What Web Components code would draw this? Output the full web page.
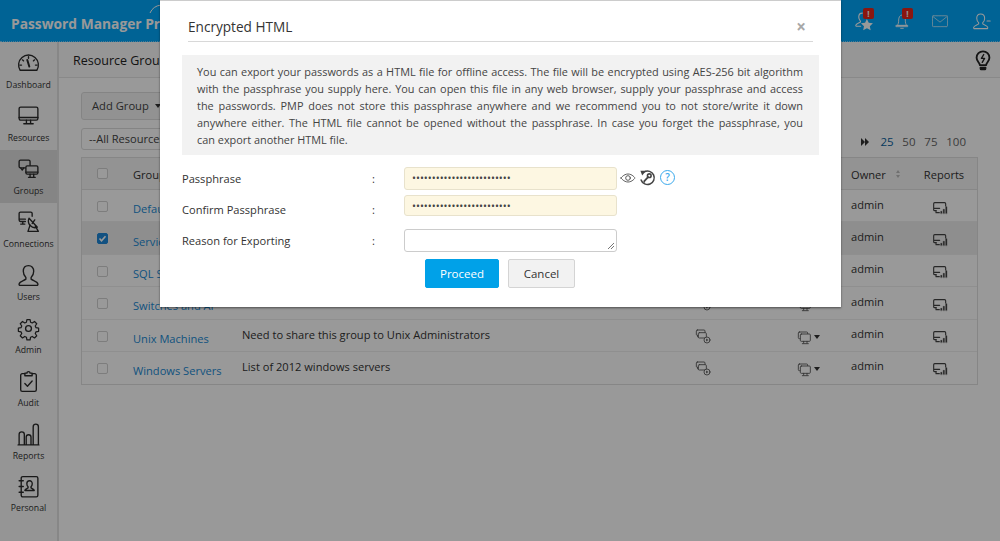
<!DOCTYPE html>
<html lang="en">
<head>
<meta charset="UTF-8">
<title>Password Manager Pro</title>
<style>
  html, body { margin: 0; height: 100%; }
  body { font-family: "Open Sans", "Liberation Sans", sans-serif; color: #333; }
</style>
</head>
<body>
<pm-app>
  <pm-header slot="header"></pm-header>
  <pm-sidebar slot="sidebar">
    <pm-nav icon="dashboard">Dashboard</pm-nav>
    <pm-nav icon="resources">Resources</pm-nav>
    <pm-nav icon="groups" active>Groups</pm-nav>
    <pm-nav icon="connections">Connections</pm-nav>
    <pm-nav icon="users">Users</pm-nav>
    <pm-nav icon="admin">Admin</pm-nav>
    <pm-nav icon="audit">Audit</pm-nav>
    <pm-nav icon="reports">Reports</pm-nav>
    <pm-nav icon="personal">Personal</pm-nav>
  </pm-sidebar>
  <pm-content slot="content"></pm-content>
  <pm-modal slot="modal"></pm-modal>
</pm-app>

<script>
const ICONS = {
  dashboard: '<path d="M4 18.500A9.500 9.500 0 1 1 20 18.500z"/><path d="M12 5.500v1.500M6.200 8.500l1.100 1M17.800 8.500l-1.100 1M3.800 13.500h1.500M18.700 13.500h1.500"/><path d="M10.800 8.500l2 6.500" stroke-width="1.800"/>',
  resources: '<rect x="3" y="3" width="18" height="12.500" rx="1.500"/><path d="M3 13h18M10 15.500v3M14 15.500v3M7.500 19h9"/>',
  groups: '<rect x="3" y="3" width="10.500" height="7.500" rx="1.300"/><path d="M4.500 10.500l1.500 2 1.500-2"/><rect x="9.500" y="8.500" width="11.500" height="8" rx="1.300" fill="var(--nav-bg)"/><path d="M9.500 14.500h11.500M13.500 16.500v2.500M17 16.500v2.500M12 19.500h6.500"/>',
  connections: '<path d="M9 11H4.300A1.300 1.300 0 0 1 3 9.700V3.300A1.300 1.300 0 0 1 4.300 2h9.900a1.300 1.300 0 0 1 1.300 1.300V6M3 8.800h6M6.500 11v2M4.500 13.500h4"/><path d="M12.500 8a6.300 6.300 0 0 0 8 8.500z"/><path d="M15.500 13l2.500-3.500"/><path d="M13.500 14.500L11.500 20.500h10L18.500 15.500"/>',
  users: '<path d="M12 2.500c-3.200 0-5 2.300-5 5.500 0 2.500 1 4.500 2.500 6v1.500c-2 1.500-6 2-6.500 4.500-.2 1 .3 1.500 1 1.500h16c.7 0 1.200-.5 1-1.500-.5-2.500-4.500-3-6.500-4.500V14c1.500-1.500 2.500-3.500 2.500-6 0-3.200-1.800-5.500-5-5.500z"/>',
  admin: '<path d="M10.300 2.500h3.400l.5 2.800 1.800.8 2.400-1.600 2.400 2.400-1.600 2.400.8 1.800 2.800.5v3.400l-2.800.5-.8 1.800 1.600 2.400-2.400 2.400-2.400-1.600-1.800.8-.5 2.800h-3.400l-.5-2.800-1.800-.8-2.400 1.600-2.400-2.400 1.600-2.400-.8-1.800-2.800-.5v-3.400l2.800-.5.8-1.800-1.600-2.400 2.400-2.400 2.400 1.600 1.800-.8z" transform="translate(1.200 1.200) scale(.9)"/><circle cx="12" cy="12" r="2.800"/>',
  audit: '<path d="M8.500 4.500H6a1.500 1.500 0 0 0-1.500 1.500v14A1.500 1.500 0 0 0 6 21.500h12a1.500 1.500 0 0 0 1.500-1.500V6A1.500 1.500 0 0 0 18 4.500h-2.500"/><path d="M8.500 6.500v-2.500h2a1.500 1.500 0 0 1 3 0h2v2.500z"/><path d="M8.500 14l2.500 2.500 4.500-5"/>',
  reports: '<path d="M3 22v-10a2.500 2.500 0 0 1 5 0v10zM9.800 22v-7.500a2.300 2.300 0 0 1 4.600 0V22zM16.500 22V4.500a2.500 2.500 0 0 1 5 0V22zM2 22h20"/>',
  personal: '<rect x="5" y="2.500" width="16" height="19.500" rx="1.500"/><path d="M3 6.500h4M3 12h4M3 17.500h4"/><path d="M13 6.500c-1.700 0-2.600 1.200-2.600 2.900 0 1.200.5 2.200 1.200 2.900v1c-1 .8-2.800 1-3.100 2.500h9c-.3-1.500-2.100-1.700-3.100-2.500v-1c.7-.7 1.200-1.700 1.200-2.900 0-1.700-.9-2.900-2.600-2.900z"/>',
  bulb: '<path d="M8.500 17.500c0-2.500-3.500-4-3.500-8a7 7 0 0 1 14 0c0 4-3.500 5.500-3.500 8z" stroke-width="2"/><path d="M12.800 6l-2.500 4.200h3.400L11.200 14.500" stroke-width="1.500"/><path d="M9 20h6v1.500a1 1 0 0 1-1 1h-4a1 1 0 0 1-1-1z" fill="currentColor"/>',
  share: '<rect x="2" y="3" width="13" height="8" rx="1.500"/><path d="M4 11v2.500h2"/><rect x="5" y="7" width="12" height="8" rx="1.500" fill="var(--row-bg, #fff)"/><circle cx="18" cy="18" r="4.500" fill="var(--row-bg, #fff)"/><path d="M16.800 15.800v4.400l3.200-2.200z" fill="currentColor" stroke="none"/>',
  screens: '<rect x="2" y="3" width="14" height="10" rx="1.500"/><rect x="5" y="6" width="15" height="11" rx="1.500" fill="var(--row-bg, #fff)"/><path d="M10 17v2.500M15 17v2.500M8 20.500h9"/>',
  report: '<path d="M6.500 16H4a1.500 1.500 0 0 1-1.500-1.500v-9A1.500 1.500 0 0 1 4 4h15a1.500 1.500 0 0 1 1.500 1.500V9M2.500 12.500h9M6 16v3h5" stroke-width="1.700"/><path d="M13 20v-3h2v3zM16.700 20v-6h2v6zM20.500 20V10h2v10z" fill="currentColor" stroke-width=".5"/>',
  eye: '<path d="M1.500 12S5.500 6 12 6s10.500 6 10.500 6-4 6-10.500 6-10.500-6-10.500-6z"/><circle cx="12" cy="12" r="3.500"/>',
  keygen: '<path d="M7.500 4A9.500 9.500 0 1 1 3 15.500" stroke-width="2.200"/><path d="M2 2.500h8L4.500 9z" fill="currentColor" stroke="none"/><circle cx="14.500" cy="9.500" r="2.600" stroke-width="2.200"/><path d="M12.800 11.500L7.500 17v1" stroke-width="2.600"/>',
  star: '<path d="M10 2.500c-2.800 0-4.300 2-4.300 4.700 0 2 .8 3.700 2 5v1c-1.800 1.300-5 1.800-5.500 3.800-.2.800.3 1.300.9 1.300H8"/><path d="M15.500 9.500l2.200 4.700 5 .6-3.700 3.400 1 5-4.500-2.500-4.500 2.500 1-5-3.700-3.400 5-.6z" fill="currentColor" stroke="none"/>',
  bell: '<path d="M5 18.500c1.500-1.500 2-4 2-8 0-4 2-7.500 5-7.500s5 3.500 5 7.500c0 4 .5 6.500 2 8z"/><path d="M3.500 18.500h17v2h-17zM10 23h4"/>',
  mail: '<rect x="2" y="5" width="20" height="14.500" rx="1" stroke-dasharray="1.500 .6"/><path d="M2.500 6l9.500 7.500L21.500 6"/>',
  user: '<path d="M11 2.500c-3.200 0-5 2.300-5 5.300 0 2.400 1 4.400 2.400 5.700v1.500c-2 1.500-5.800 2-6.300 4.500-.2 1 .3 1.500 1 1.500h15.800c.7 0 1.200-.5 1-1.500-.4-2.500-4.300-3-6.300-4.500v-1.500c1.400-1.300 2.400-3.300 2.400-5.700 0-3-1.800-5.300-5-5.300z"/><path d="M19 11.500h4"/>'
}
function icon(name, size) {
  return `<svg width="${size}" height="${size}" viewBox="0 0 24 24" fill="none" stroke="currentColor" stroke-width="1.300" stroke-linejoin="round" stroke-linecap="round">${ICONS[name]}</svg>`
}

class Base extends HTMLElement {
  constructor() {
    super()
    this.attachShadow({ mode: 'open' })
  }
}

customElements.define('pm-app', class extends Base {
  constructor() {
    super()
    this.shadowRoot.innerHTML = `
      <style>
        :host { display: block; position: relative; width: 1000px; height: 541px; overflow: hidden; background: #fff; }
        .main { display: flex; height: 499px; }
        .scrim { position: absolute; inset: 0; background: rgba(0,0,0,.4); }
      </style>
      <slot name="header"></slot>
      <div class="main">
        <slot name="sidebar"></slot>
        <slot name="content"></slot>
      </div>
      <div class="scrim"></div>
      <slot name="modal"></slot>`
  }
})

customElements.define('pm-header', class extends Base {
  constructor() {
    super()
    const item = (name, size, gap, badge) => `<span class="ico" style="width:${size}px;height:${size}px;margin-left:${gap}px">${icon(name, size)}${badge ? `<b style="left:${badge[0]}px;top:${badge[1]}px">!</b>` : ''}</span>`
    this.shadowRoot.innerHTML = `
      <style>
        :host { display: flex; align-items: center; justify-content: space-between; height: 42px; box-sizing: border-box; background: #00a5f8; border-bottom: 1px dotted #7fcdf5; color: #fff; }
        .logo { position: relative; margin: 5px 0 0 11px; font: 700 13.800px "Open Sans", sans-serif; color: #fff; white-space: nowrap; }
        .logo svg { position: absolute; left: 138px; top: -10px; }
        .icons { display: flex; align-items: center; margin-right: 9.500px; padding-top: 1px; }
        .ico { position: relative; display: block; }
        .ico svg { display: block; }
        .dim { opacity: .65; }
        b { position: absolute; width: 11px; height: 11px; border-radius: 2px; background: #e6261c; color: #fff; font: 700 8px/11px "Open Sans", sans-serif; text-align: center; }
      </style>
      <div class="logo">Password Manager Pro<svg width="14" height="10" viewBox="0 0 14 10" fill="none" stroke="#fff" stroke-width="1"><path d="M1 9Q4 2 12 1"/></svg></div>
      <div class="icons">${item('star', 20, 0, [9, -3.5])}${item('bell', 16, 20, [8, -5.5])}<span class="dim">${item('mail', 18, 20.5)}</span>${item('user', 19, 23)}</div>`
  }
})

customElements.define('pm-sidebar', class extends Base {
  constructor() {
    super()
    this.shadowRoot.innerHTML = `
      <style>
        :host { display: flex; flex-direction: column; flex: none; width: 59px; box-sizing: border-box; background: #f8f8f8; border-right: 2px solid #e2e2e2; padding-top: 2px; }
      </style>
      <slot></slot>`
  }
})

customElements.define('pm-nav', class extends Base {
  connectedCallback() {
    const active = this.hasAttribute('active')
    this.shadowRoot.innerHTML = `
      <style>
        :host { display: flex; flex-direction: column; align-items: center; height: 53px; box-sizing: border-box; padding-top: 7px; gap: 3px; --nav-bg: ${active ? '#dedede' : '#f8f8f8'}; background: var(--nav-bg); font: 8.700px/13px "Open Sans", sans-serif; color: #333; }
        :host(:last-child) { margin-top: -1px; }
        svg { display: block; color: #2a2a2a; }
      </style>
      ${icon(this.getAttribute('icon'), 25)}
      <div><slot></slot></div>`
  }
})

customElements.define('pm-content', class extends Base {
  constructor() {
    super()
    this.shadowRoot.innerHTML = `
      <style>
        :host { display: block; flex: 1; min-width: 0; font-size: 11.100px; }
        .title { display: flex; justify-content: space-between; align-items: center; height: 36px; box-sizing: border-box; padding: 1px 6px 0 14px; background: #fafafa; border-bottom: 1px solid #e4e4e4; font-size: 12.500px; color: #222; }
        .title svg { display: block; color: #222; }
        .tools { padding: 14px 0 0 22px; height: 79px; box-sizing: border-box; position: relative; }
        .btn { display: flex; align-items: center; width: 100px; height: 28px; box-sizing: border-box; border: 1px solid #ddd; border-radius: 3px; background: #f4f4f4; padding: 0 0 1px 10px; font-size: 11.200px; color: #444; }
        .btn i { display: block; margin: 1px 0 0 6px; border: 3px solid transparent; border-top: 4px solid #333; border-bottom: 0; }
        .sel { display: block; width: 130px; height: 22px; margin-top: 8px; box-sizing: border-box; border: 1px solid #ddd; border-radius: 3px; padding-left: 7px; line-height: 20px; color: #444; }
        .pager { position: absolute; right: 34px; top: 56px; display: flex; align-items: center; gap: 8.800px; font-size: 11.500px; color: #666; }
        .pager .cur { color: #0a5f9e; }
        .pager i { display: block; width: 0; height: 0; border: 4px solid transparent; border-left: 4.500px solid #333; border-right: 0; margin-right: -8.800px; }
        .pager i.last { margin-right: 3px; }
      </style>
      <div class="title"><span>Resource Groups</span>${icon('bulb', 22)}</div>
      <div class="tools">
        <span class="btn">Add Group<i></i></span>
        <span class="sel">--All Resources</span>
        <div class="pager"><i></i><i class="last"></i><span class="cur">25</span><span>50</span><span>75</span><span>100</span></div>
      </div>
      <pm-table></pm-table>`
  }
})

customElements.define('pm-table', class extends Base {
  constructor() {
    super()
    const rows = [
      ['Default', '', false],
      ['Service', '', true],
      ['SQL Servers', '', false],
      ['Switches and AP', '', false],
      ['Unix Machines', 'Need to share this group to Unix Administrators', false],
      ['Windows Servers', 'List of 2012 windows servers', false]
    ]
    this.shadowRoot.innerHTML = `
      <style>
        :host { display: block; width: 897px; margin-left: 22px; box-sizing: border-box; border: 1px solid #e0e0e0; font-size: 11.100px; --cols: 41px 109px 448px 46px 116px 64px 71px; }
        .head { display: grid; grid-template-columns: var(--cols); height: 32px; box-sizing: border-box; align-items: center; background: #f5f5f5; border-bottom: 1px solid #e2e2e2; color: #333; }
        .head > div { padding-top: 1px; }
        .owner { display: flex; align-items: center; padding-left: 9px; }
        .rep { padding-left: 5px; text-align: center; }
        .sort { display: block; margin-left: 10px; }
        .sort i { display: block; border: 2.500px solid transparent; }
        .sort i:first-child { border-top: 0; border-bottom: 3px solid #bbb; margin-bottom: 1.500px; }
        .sort i:last-child { border-bottom: 0; border-top: 3px solid #bbb; }
        .box { width: 11px; height: 11px; box-sizing: border-box; margin-left: 15px; border: 1px solid #d0d0d0; border-radius: 2px; background: #fff; }
        .g { padding-left: 10px; }
      </style>
      <div class="head"><div class="box"></div><div class="g">Group</div><div></div><div></div><div></div><div class="owner">Owner<span class="sort"><i></i><i></i></span></div><div class="rep">Reports</div></div>
      ${rows.map(r => `<pm-row ${r[2] ? 'checked' : ''} name="${r[0]}" desc="${r[1]}"></pm-row>`).join('')}`
  }
})

customElements.define('pm-row', class extends Base {
  connectedCallback() {
    const checked = this.hasAttribute('checked')
    this.shadowRoot.innerHTML = `
      <style>
        :host { display: grid; grid-template-columns: var(--cols); height: 32.400px; box-sizing: border-box; align-items: start; border-bottom: 1px solid #eee; --row-bg: ${checked ? '#ededed' : '#fff'}; background: var(--row-bg); color: #333; }
        :host(:last-child) { border-bottom: 0; }
        .box { width: 11px; height: 11px; box-sizing: border-box; margin: 11px 0 0 15px; border: 1px solid #d0d0d0; border-radius: 2px; background: #fff; }
        .box.on { background: #1e88d8; border-color: #1e88d8; color: #fff; }
        .box svg { display: block; margin: -1px; }
        .name { padding: 10.300px 0 0 10px; color: #1a8ad4; white-space: nowrap; line-height: 17px; }
        .desc { padding: 6.300px 0 0 10px; line-height: 17px; }
        .owner { padding: 5.500px 0 0 9px; line-height: 17px; }
        .i { text-align: center; color: #555; }
        .i svg { display: block; margin: 0 auto; }
        .sh { padding-top: 8px; }
        .rp { padding: 9.500px 4px 0 0; color: #444; }
        .s { display: flex; padding: 10px 0 0 71px; align-items: center; gap: 1px; color: #555; }
        .s svg { flex: none; }
        .s i { display: block; margin-top: -1px; border: 3px solid transparent; border-top: 4px solid #333; border-bottom: 0; }
      </style>
      <div class="box ${checked ? 'on' : ''}">${checked ? '<svg width="11" height="11" viewBox="0 0 11 11" fill="none" stroke="#fff" stroke-width="1.600"><path d="M2.500 5.500l2 2.200 4-4.500"/></svg>' : ''}</div>
      <div class="name">${this.getAttribute('name')}</div>
      <div class="desc">${this.getAttribute('desc')}</div>
      <div class="i sh">${icon('share', 16)}</div>
      <div class="s">${icon('screens', 16)}<i></i></div>
      <div class="owner">admin</div>
      <div class="i rp">${icon('report', 16)}</div>`
  }
})

customElements.define('pm-modal', class extends Base {
  constructor() {
    super()
    const dots = '&bull;'.repeat(25)
    this.shadowRoot.innerHTML = `
      <style>
        :host { position: absolute; left: 160px; top: 0; width: 681px; height: 307px; box-sizing: border-box; background: #fff; border-top: 1px solid #ccc; box-shadow: 0 1px 2px rgba(0,0,0,.5); padding: 0 22px; font-size: 11.100px; color: #333; }
        .title { display: flex; justify-content: space-between; align-items: center; height: 41px; box-sizing: border-box; margin: 0 6px; padding: 11px 7px 0 0; border-bottom: 1px solid #d8d8d8; font-size: 13.600px; color: #333; }
        .x { font-size: 17px; font-weight: 700; color: #a8a8a8; line-height: 1; }
        .info { margin-top: 13px; height: 100px; box-sizing: border-box; padding: 8px 16px 0 15px; background: #f2f2f2; font-size: 10.900px; line-height: 17.100px; color: #444; }
        .info div { white-space: nowrap; text-align: justify; text-align-last: justify; }
        .info div:last-child { text-align-last: left; }
        form { display: block; margin: 12px 0 0; }
        .btns { display: flex; gap: 9px; margin-left: 243px; }
        .btns span { display: block; height: 29px; box-sizing: border-box; border-radius: 2px; font-size: 11.500px; line-height: 27px; text-align: center; }
        .go { width: 74px; background: #00a1e8; border: 1px solid #00a1e8; color: #fff; }
        .no { width: 67px; background: #f2f2f2; border: 1px solid #d4d4d4; color: #333; }
      </style>
      <div class="title"><span>Encrypted HTML</span><span class="x">&times;</span></div>
      <div class="info">
        <div>You can export your passwords as a HTML file for offline access. The file will be encrypted using AES-256 bit algorithm</div>
        <div>with the passphrase you supply here. You can open this file in any web browser, supply your passphrase and access</div>
        <div>the passwords. PMP does not store this passphrase anywhere and we recommend you to not store/write it down</div>
        <div>anywhere either. The HTML file cannot be opened without the passphrase. In case you forget the passphrase, you</div>
        <div>can export another HTML file.</div>
      </div>
      <form>
        <pm-field label="Passphrase" value="${dots}" tools></pm-field>
        <pm-field label="Confirm Passphrase" value="${dots}" confirm></pm-field>
        <pm-field label="Reason for Exporting" area></pm-field>
      </form>
      <div class="btns"><span class="go">Proceed</span><span class="no">Cancel</span></div>`
  }
})

customElements.define('pm-field', class extends Base {
  connectedCallback() {
    const area = this.hasAttribute('area')
    const first = this.hasAttribute('tools')
    const confirm = this.hasAttribute('confirm')
    const tools = first ? `<div class="tools"><span>${icon('eye', 16)}</span><span>${icon('keygen', 17)}</span><span class="q">?</span></div>` : ''
    this.shadowRoot.innerHTML = `
      <style>
        :host { display: grid; grid-template-columns: 190px 32px 213px auto; align-items: start; height: ${area ? 30 : first ? 28 : 34}px; font-size: 11.100px; color: #333; }
        .l { line-height: 24px; padding-top: ${confirm ? 3 : 0}px; }
        .f { height: ${area ? 23 : first ? 23 : 21}px; box-sizing: border-box; border: 1px solid ${area ? '#ccc' : '#e8e2cc'}; border-radius: 3px; background: ${area ? '#fff' : '#fdf7e2'}; padding-left: 7px; line-height: 21px; font-size: 10.500px; color: #444; position: relative; white-space: nowrap; }
        .grip { position: absolute; right: 1px; bottom: 1px; }
        .tools { display: flex; align-items: center; gap: 3px; padding: 2px 0 0 3px; color: #444; }
        .tools span { display: block; }
        .tools svg { display: block; }
        .q { width: 15px; height: 15px; box-sizing: border-box; margin-left: 1px; border: 1px solid #3aa9ec; border-radius: 50%; color: #3aa9ec; font: 600 10px/13px "Open Sans", sans-serif; text-align: center; }
      </style>
      <div class="l">${this.getAttribute('label')}</div>
      <div class="l">:</div>
      <div class="f">${this.getAttribute('value') || ''}${area ? '<svg class="grip" width="8" height="8" viewBox="0 0 8 8" stroke="#777" fill="none"><path d="M1 7l6-6M4 7l3-3"/></svg>' : ''}</div>
      ${tools}`
  }
})
</script>
</body>
</html>
